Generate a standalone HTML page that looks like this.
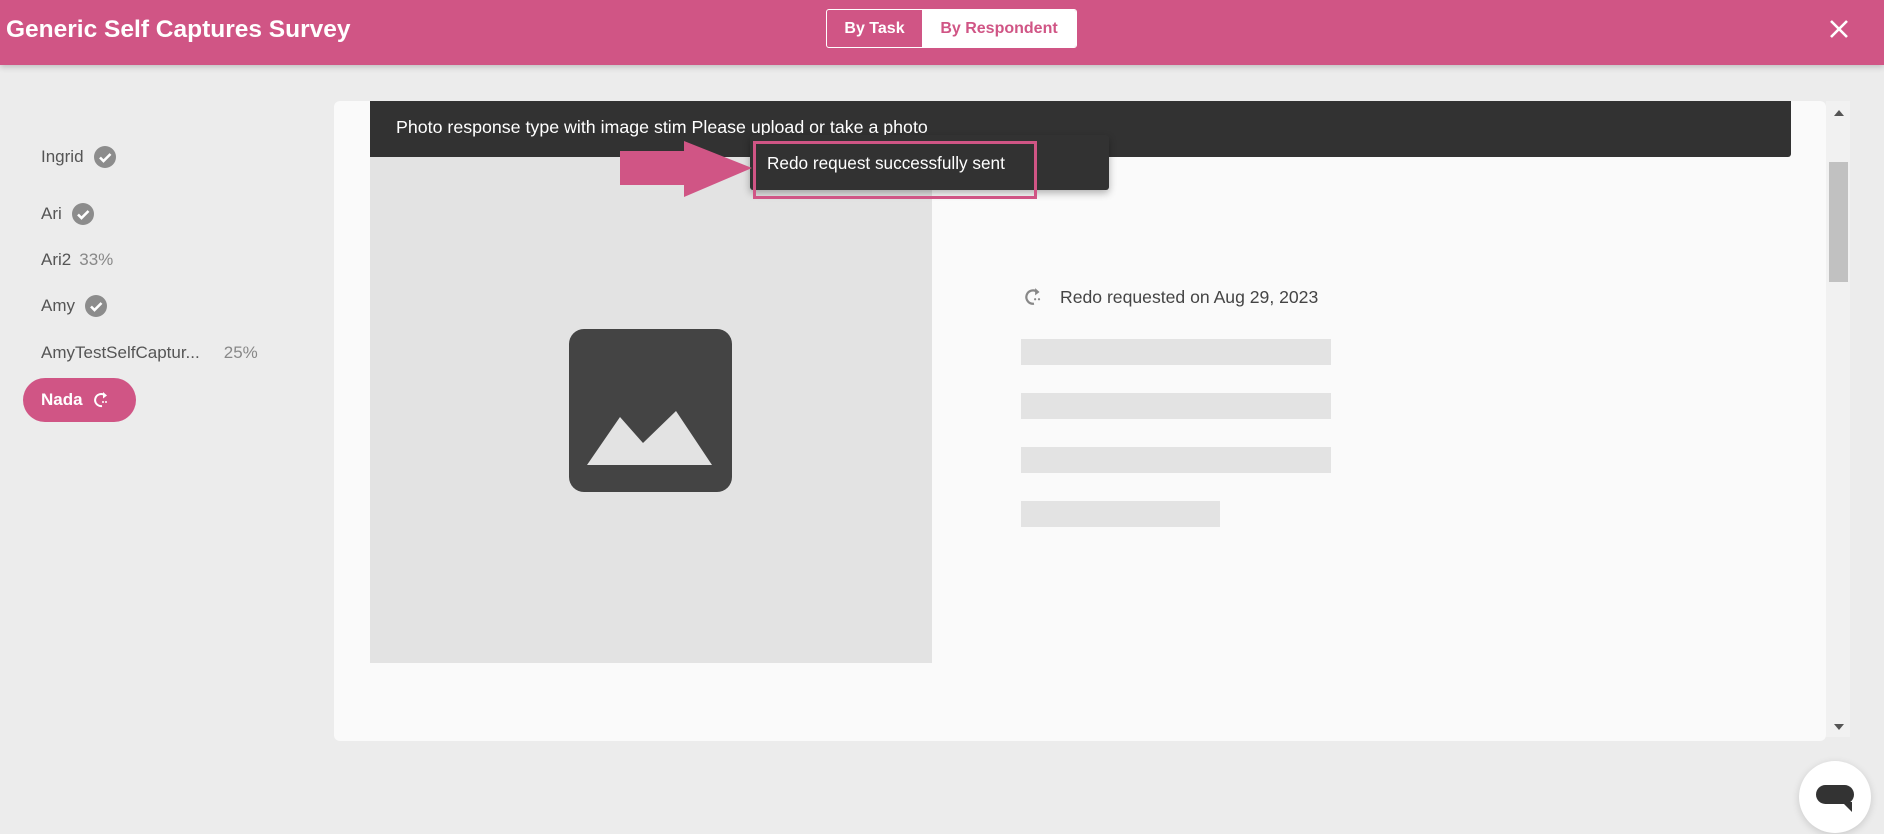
<!DOCTYPE html>
<html><head><meta charset="utf-8"><style>
*{box-sizing:border-box;margin:0;padding:0}
body{width:1884px;height:834px;background:#ececec;font-family:"Liberation Sans",sans-serif;position:relative;overflow:hidden}
.hdr{position:absolute;left:0;top:0;width:1884px;height:65px;background:#d05585;box-shadow:0 2px 6px rgba(0,0,0,.2)}
.title{position:absolute;left:6px;top:16px;color:#fff;font-size:24.5px;font-weight:bold}
.tog{position:absolute;left:826px;top:9px;width:251px;height:39px;border:1px solid #fff;border-radius:3px;overflow:hidden;display:flex}
.tog div{display:flex;align-items:center;justify-content:center;font-size:16px;font-weight:bold}
.t1{width:95px;color:#fff}
.t2{flex:1;background:#fff;color:#d05585}
.x{position:absolute;left:1826px;top:16px}
.side{position:absolute;left:41px;color:#555;font-size:17px;display:flex;align-items:center}
.chk{width:22px;height:22px;border-radius:50%;background:#8c8c8c;display:inline-block;margin-left:10px;position:relative}
.pct{color:#888;margin-left:8px}
.nada{position:absolute;left:23px;top:378px;width:113px;height:44px;border-radius:22px;background:#d05585;color:#fff;font-weight:bold;font-size:17px;display:flex;align-items:center;padding-left:18px}
.card{position:absolute;left:334px;top:101px;width:1492px;height:640px;background:#fafafa;border-radius:6px}
.bar{position:absolute;left:370px;top:101px;width:1421px;height:56px;background:#323232;color:#fff;font-size:17.8px;padding:16px 0 0 26px;border-radius:0 0 3px 0}
.img{position:absolute;left:370px;top:157px;width:562px;height:506px;background:#e3e3e3}
.sb{position:absolute;left:1826px;top:101px;width:24px;height:636px;background:#f1f1f1}
.thumb{position:absolute;left:1829px;top:162px;width:19px;height:120px;background:#c1c1c1}
.g{position:absolute;left:1021px;height:26px;background:#e3e3e3}
.toast{position:absolute;left:750px;top:135px;width:359px;height:55px;background:#323232;box-shadow:0 3px 8px rgba(0,0,0,.3);border-radius:3px}
.pb{position:absolute;left:753px;top:141px;width:284px;height:58px;border:3px solid #d05585}
.tt{position:absolute;left:767px;top:153px;color:#fff;font-size:17.2px}
</style></head><body>
<div class="hdr">
 <div class="title">Generic Self Captures Survey</div>
 <div class="tog"><div class="t1">By Task</div><div class="t2">By Respondent</div></div>
 <svg class="x" width="26" height="26" viewBox="0 0 26 26"><path d="M5 5L21 21M21 5L5 21" stroke="#fff" stroke-width="2.6"/></svg>
</div>

<div class="side" style="top:146px">Ingrid<span class="chk"><svg width="22" height="22"><path d="M6 11.5l3.5 3.5 7-7" stroke="#fff" stroke-width="2.6" fill="none"/></svg></span></div>
<div class="side" style="top:203px">Ari<span class="chk"><svg width="22" height="22"><path d="M6 11.5l3.5 3.5 7-7" stroke="#fff" stroke-width="2.6" fill="none"/></svg></span></div>
<div class="side" style="top:250px">Ari2<span class="pct">33%</span></div>
<div class="side" style="top:295px">Amy<span class="chk"><svg width="22" height="22"><path d="M6 11.5l3.5 3.5 7-7" stroke="#fff" stroke-width="2.6" fill="none"/></svg></span></div>
<div class="side" style="top:343px">AmyTestSelfCaptur...<span class="pct" style="margin-left:24px">25%</span></div>
<div class="nada">Nada<svg style="margin-left:10px" width="18" height="18" viewBox="0 0 18 18"><path d="M12 4.5A6 6 0 1 0 9 15" stroke="#fff" stroke-width="2" fill="none"/><path d="M10 1l4 3.5-4 3z" fill="#fff"/><circle cx="10" cy="11" r="1" fill="#fff"/><circle cx="13" cy="11" r="1" fill="#fff"/></svg></div>

<div class="card"></div>
<div class="bar">Photo response type with image stim Please upload or take a photo</div>
<div class="img"></div>
<svg style="position:absolute;left:569px;top:329px" width="163" height="163" viewBox="0 0 163 163"><rect width="163" height="163" rx="15" fill="#444"/><path d="M18 136L51 88 74 114 107 82 143 136Z" fill="#e3e3e3"/></svg>
<div class="sb"></div><div class="thumb"></div>
<svg style="position:absolute;left:1833px;top:108px" width="12" height="10"><path d="M1 8L6 2 11 8Z" fill="#555"/></svg>
<svg style="position:absolute;left:1833px;top:722px" width="12" height="10"><path d="M1 2L6 8 11 2Z" fill="#555"/></svg>

<svg style="position:absolute;left:1024px;top:287px" width="20" height="20" viewBox="0 0 18 18"><path d="M12 4.5A6 6 0 1 0 9 15" stroke="#888" stroke-width="2" fill="none"/><path d="M10 1l4 3.5-4 3z" fill="#888"/><circle cx="10" cy="11" r="1" fill="#888"/><circle cx="13.5" cy="11" r="1" fill="#888"/></svg>
<div style="position:absolute;left:1060px;top:287px;color:#444;font-size:17.6px">Redo requested on Aug 29, 2023</div>
<div class="g" style="top:339px;width:310px"></div>
<div class="g" style="top:393px;width:310px"></div>
<div class="g" style="top:447px;width:310px"></div>
<div class="g" style="top:501px;width:199px"></div>

<div class="toast"></div>
<div class="tt">Redo request successfully sent</div>
<div class="pb"></div>
<svg style="position:absolute;left:618px;top:139px" width="136" height="60"><path d="M2 12H66V2L134 29 66 58V46H2Z" fill="#d05585"/></svg>

<div style="position:absolute;left:1799px;top:761px;width:72px;height:72px;border-radius:50%;background:#fff;box-shadow:0 2px 8px rgba(0,0,0,.15)"></div>
<svg style="position:absolute;left:1814px;top:783px" width="44" height="34"><rect x="2" y="2" width="38" height="19" rx="9.5" fill="#333"/><path d="M28 19h10v10z" fill="#333"/></svg>
</body></html>
